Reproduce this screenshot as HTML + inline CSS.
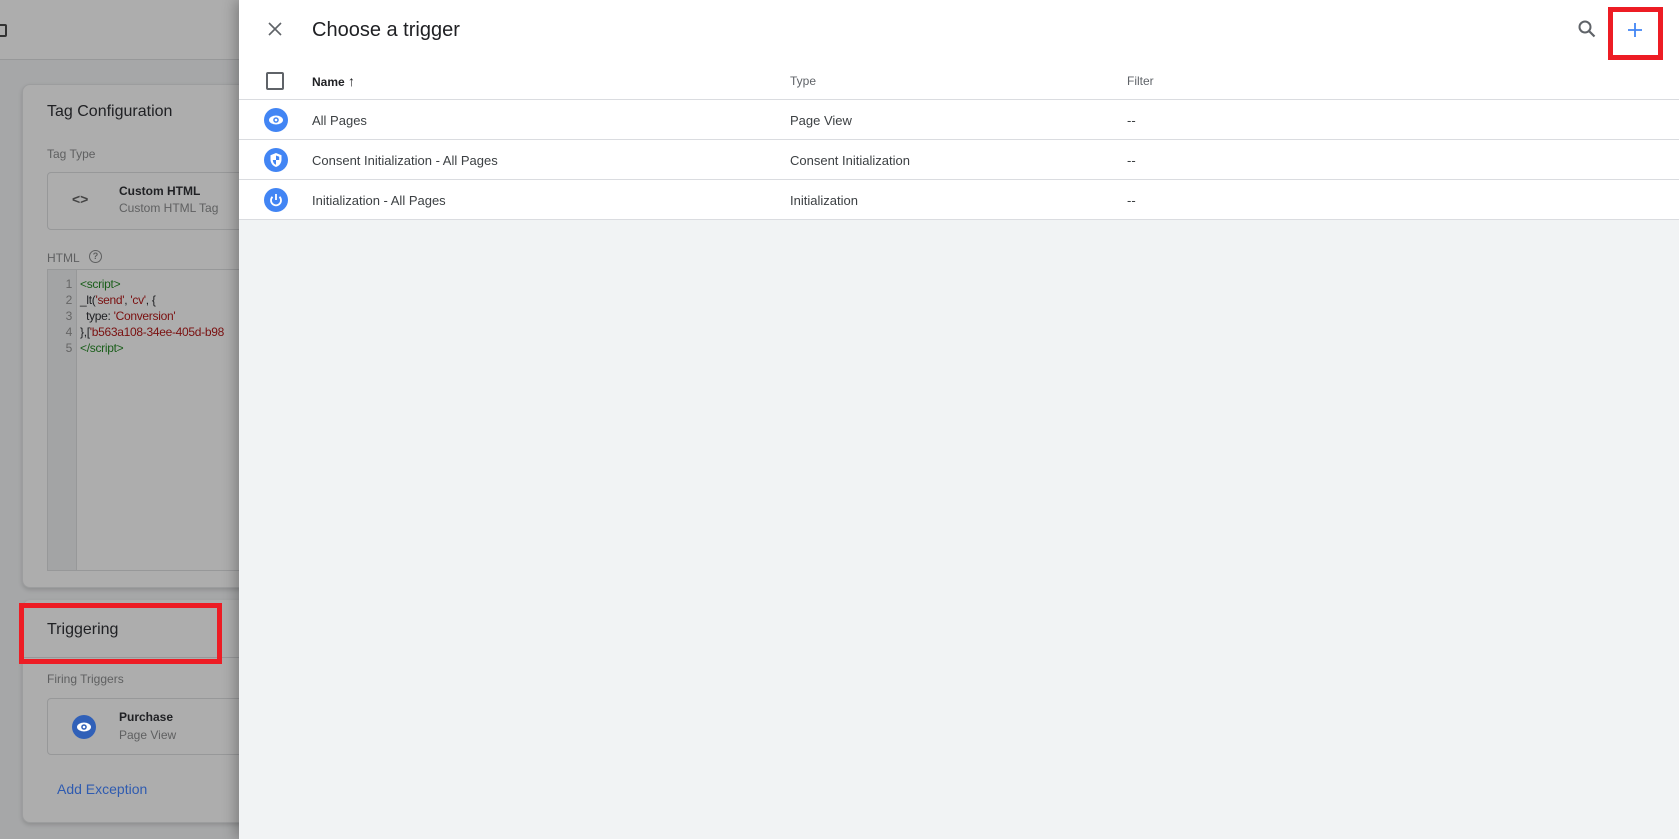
<!DOCTYPE html>
<html><head><meta charset="utf-8">
<style>
*{box-sizing:border-box;margin:0;padding:0}
body{width:1679px;height:839px;overflow:hidden;position:relative;font-family:"Liberation Sans",Arial,sans-serif;background:#a5a6a7}
.abs{position:absolute}
.left{position:absolute;left:0;top:0;width:239px;height:839px;background:#a6a7a8}
.topbar{position:absolute;left:0;top:0;width:239px;height:60px;background:#adadad;border-bottom:1px solid #979899}
.card{position:absolute;left:22px;width:240px;background:#adadad;border:1px solid #9c9d9e;border-radius:8px;box-shadow:0 2px 4px rgba(0,0,0,.15)}
.t{position:absolute;white-space:nowrap}
.panel{position:absolute;left:239px;top:0;width:1440px;height:839px;background:#f1f3f4;box-shadow:-4px 0 12px rgba(0,0,0,.25)}
.hdr{position:absolute;left:0;top:0;width:1440px;height:100px;background:#fff;border-bottom:1px solid #dadce0}
.row{position:absolute;left:0;width:1440px;height:40px;background:#fff;border-bottom:1px solid #dadce0;font-size:13px;color:#3c4043}
.row .t{top:13px}
.ic{position:absolute;left:25px;top:8px;width:24px;height:24px;border-radius:50%;background:#4285f4}
.code{font-family:"Liberation Sans",Arial,sans-serif;font-size:12px;letter-spacing:-0.3px}
</style></head><body>
<div class="left">
  <div class="topbar"></div>
  <div class="abs" style="left:-6px;top:24px;width:13px;height:13px;border:2px solid #333;border-radius:2px"></div>
  <div class="card" style="top:84px;height:504px">
    <div class="t" style="left:24px;top:18px;font-size:16px;color:#202124">Tag Configuration</div>
    <div class="t" style="left:24px;top:62px;font-size:12px;color:#5f6061">Tag Type</div>
    <div class="abs" style="left:24px;top:87px;width:220px;height:58px;border:1px solid #979899;border-radius:4px"></div>
    <div class="t" style="left:49px;top:106px;font-size:14px;color:#444;font-weight:bold">&lt;&gt;</div>
    <div class="t" style="left:96px;top:99px;font-size:12px;font-weight:bold;color:#202124">Custom HTML</div>
    <div class="t" style="left:96px;top:116px;font-size:12px;color:#5f6061">Custom HTML Tag</div>
    <div class="t" style="left:24px;top:166px;font-size:12px;color:#5f6061">HTML</div>
    <div class="abs" style="left:66px;top:165px;width:13px;height:13px;border:1.5px solid #5f6061;border-radius:50%;font-size:9px;text-align:center;line-height:10px;color:#5f6061;font-weight:bold">?</div>
    <div class="abs" style="left:24px;top:184px;width:220px;height:302px;border:1px solid #979899;border-right:none"></div>
    <div class="abs" style="left:25px;top:185px;width:29px;height:300px;background:#a3a4a5;border-right:1px solid #979899"></div>
    <div class="code t" style="left:25px;top:191px;width:24px;text-align:right;line-height:16px;color:#666">1<br>2<br>3<br>4<br>5</div>
    <div class="code t" style="left:57px;top:191px;line-height:16px;color:#202124">
      <span style="color:#1a5e1a">&lt;script&gt;</span><br>
      _lt(<span style="color:#7a1010">'send'</span>, <span style="color:#7a1010">'cv'</span>, {<br>
      &nbsp;&nbsp;type: <span style="color:#7a1010">'Conversion'</span><br>
      },[<span style="color:#7a1010">'b563a108-34ee-405d-b98</span><br>
      <span style="color:#1a5e1a">&lt;/script&gt;</span>
    </div>
  </div>
  <div class="card" style="top:600px;height:223px;border-top:none">
    <div class="abs" style="left:0;top:57px;width:240px;border-top:1px solid #979899"></div>
    <div class="t" style="left:24px;top:21px;font-size:16px;color:#202124">Triggering</div>
    <div class="t" style="left:24px;top:72px;font-size:12px;color:#5f6061">Firing Triggers</div>
    <div class="abs" style="left:24px;top:98px;width:220px;height:57px;border:1px solid #979899;border-radius:4px"></div>
    <div class="abs" style="left:49px;top:115px;width:24px;height:24px;border-radius:50%;background:#3060b8">
      <svg width="24" height="24" viewBox="0 0 24 24"><ellipse cx="12" cy="12" rx="7" ry="4.5" fill="#fff"/><circle cx="12" cy="12" r="2.8" fill="#3060b8"/><circle cx="12" cy="12" r="1.3" fill="#fff"/></svg>
    </div>
    <div class="t" style="left:96px;top:110px;font-size:12px;font-weight:bold;color:#202124">Purchase</div>
    <div class="t" style="left:96px;top:128px;font-size:12px;color:#5f6061">Page View</div>
    <div class="t" style="left:34px;top:181px;font-size:14px;color:#2f5bb0">Add Exception</div>
  </div>
  <div class="abs" style="left:19px;top:603px;width:203px;height:61px;border:5px solid #ed1c24"></div>
</div>

<div class="panel">
  <div class="hdr">
    <svg class="abs" style="left:28px;top:21px" width="16" height="16" viewBox="0 0 16 16"><path d="M2 2L14 14M14 2L2 14" stroke="#5f6368" stroke-width="1.6"/></svg>
    <div class="t" style="left:73px;top:19px;font-size:20px;color:#202124">Choose a trigger</div>
    <svg class="abs" style="left:1338px;top:19px" width="20" height="20" viewBox="0 0 20 20"><circle cx="8" cy="8" r="5.5" fill="none" stroke="#5f6368" stroke-width="2"/><path d="M12 12L17.5 17.5" stroke="#5f6368" stroke-width="2.2"/></svg>
    <div class="abs" style="left:1369px;top:7px;width:55px;height:53px;border:5px solid #ed1c24"></div>
    <svg class="abs" style="left:1388px;top:22px" width="16" height="16" viewBox="0 0 16 16"><path d="M8 1V15M1 8H15" stroke="#4285f4" stroke-width="1.8"/></svg>
    <div class="abs" style="left:27px;top:72px;width:18px;height:18px;border:2px solid #5f6368;border-radius:2px"></div>
    <div class="t" style="left:73px;top:73px;font-size:12px;font-weight:bold;color:#202124">Name <span style="font-weight:normal;font-size:14px">&#8593;</span></div>
    <div class="t" style="left:551px;top:74px;font-size:12px;color:#5f6368">Type</div>
    <div class="t" style="left:888px;top:74px;font-size:12px;color:#5f6368">Filter</div>
  </div>
  <div class="row" style="top:100px">
    <div class="ic"><svg width="24" height="24" viewBox="0 0 24 24"><ellipse cx="12" cy="12" rx="7" ry="4.5" fill="#fff"/><circle cx="12" cy="12" r="2.8" fill="#4285f4"/><circle cx="12" cy="12" r="1.3" fill="#fff"/></svg></div>
    <div class="t" style="left:73px">All Pages</div><div class="t" style="left:551px">Page View</div><div class="t" style="left:888px">--</div>
  </div>
  <div class="row" style="top:140px">
    <div class="ic"><svg width="24" height="24" viewBox="0 0 24 24"><path d="M12 5L17.5 7.3V11.5C17.5 15 15.2 18 12 19C8.8 18 6.5 15 6.5 11.5V7.3Z" fill="#fff"/><path d="M12 7.5V12H8.8C9 14.6 10.3 16.2 12 16.8V12H15.2V8.8Z" fill="#4285f4"/></svg></div>
    <div class="t" style="left:73px">Consent Initialization - All Pages</div><div class="t" style="left:551px">Consent Initialization</div><div class="t" style="left:888px">--</div>
  </div>
  <div class="row" style="top:180px">
    <div class="ic"><svg width="24" height="24" viewBox="0 0 24 24"><path d="M8.5 8.8A5 5 0 1 0 15.5 8.8" fill="none" stroke="#fff" stroke-width="1.8"/><path d="M12 6V12" stroke="#fff" stroke-width="1.8"/></svg></div>
    <div class="t" style="left:73px">Initialization - All Pages</div><div class="t" style="left:551px">Initialization</div><div class="t" style="left:888px">--</div>
  </div>
</div>
</body></html>
